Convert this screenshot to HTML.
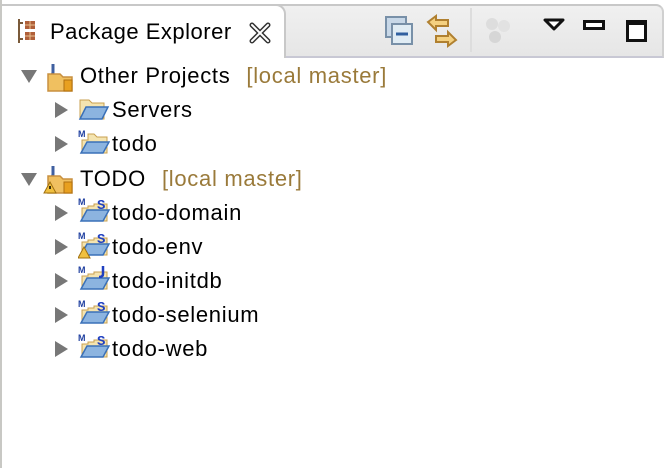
<!DOCTYPE html>
<html><head><style>
body{margin:0;width:666px;height:468px;background:#fff;position:relative;overflow:hidden;font-family:"Liberation Sans",sans-serif;}
.lb{position:absolute;left:0;top:0;width:2px;height:468px;background:#c8c8c4}
.bar{position:absolute;left:0;top:4px;width:662px;height:50px;background:linear-gradient(#f0f0f0,#e6e6e6);border-top:2px solid #c8c8c8;border-right:2px solid #d0d0d0;border-radius:0 8px 0 0;border-bottom:2px solid #c8c8d4}
.tab{position:absolute;left:0;top:4px;width:286px;height:54px;background:#fff;border:2px solid #c8c8c8;border-bottom:none;border-left:none;border-radius:0 10px 0 0;box-sizing:border-box}
.t{position:absolute;font-size:22px;letter-spacing:0.7px;color:#000;line-height:24px;white-space:nowrap}
.g{color:#9a7a3a;margin-left:16px}
.arr{position:absolute;width:0;height:0}
.r{border-top:8px solid transparent;border-bottom:8px solid transparent;border-left:13px solid #777}
.d{border-left:8px solid transparent;border-right:8px solid transparent;border-top:13px solid #777}
</style></head><body>
<div class="bar"></div>
<div class="tab"></div>
<div class="lb"></div>
<svg style="position:absolute;left:17px;top:19px" width="20" height="24"><path d="M2 0v24M2 4h4M2 20h4" stroke="#7a5a3a" stroke-width="2" fill="none"/><rect x="8" y="2" width="10" height="8" fill="#b0603a"/><rect x="8" y="13" width="10" height="8" fill="#b0603a"/><path d="M13 2v8M8 6h10M13 13v8M8 17h10" stroke="#e8c090" stroke-width="1"/></svg>
<div class="t" style="left:50px;top:20px;letter-spacing:0.5px">Package Explorer</div>
<svg style="position:absolute;left:249px;top:22px" width="22" height="22"><path d="M3 3l16 16M19 3L3 19" stroke="#333" stroke-width="5" stroke-linecap="round"/><path d="M3 3l16 16M19 3L3 19" stroke="#fff" stroke-width="2" stroke-linecap="round"/></svg>
<svg style="position:absolute;left:385px;top:16px" width="28" height="30"><rect x="1" y="1" width="20" height="20" fill="#c8d8e8" stroke="#7890a8" stroke-width="2"/><rect x="7" y="8" width="20" height="20" fill="#e0ecf4" stroke="#7890a8" stroke-width="2"/><path d="M11 18h12" stroke="#3060a0" stroke-width="3"/></svg>
<svg style="position:absolute;left:425px;top:14px" width="34" height="34"><path d="M3 8l8-6v4h12v6H11v4z" fill="#f4d080" stroke="#b08030" stroke-width="2"/><path d="M31 26l-8 6v-4H11v-6h12v-4z" fill="#f4d080" stroke="#b08030" stroke-width="2"/></svg>
<div style="position:absolute;left:470px;top:8px;width:2px;height:44px;background:#ddd"></div>
<svg style="position:absolute;left:484px;top:16px" width="30" height="30"><circle cx="8" cy="8" r="6" fill="#ddd"/><circle cx="20" cy="10" r="6" fill="#e2e2e2"/><circle cx="11" cy="21" r="6" fill="#d6d6d6"/></svg>
<svg style="position:absolute;left:543px;top:18px" width="22" height="14"><path d="M2 2h18l-9 9z" fill="#fff" stroke="#111" stroke-width="3" stroke-linejoin="round"/></svg>
<div style="position:absolute;left:583px;top:20px;width:16px;height:4px;border:3px solid #111;background:#fff"></div>
<div style="position:absolute;left:626px;top:20px;width:15px;height:14px;border:3px solid #111;border-top-width:5px;background:#fff"></div>
<div class="arr d" style="left:21px;top:70px"></div>
<svg style="position:absolute;left:42px;top:62px" width="34" height="30"><path d="M11 2v8q0 4-4 4" stroke="#4060a0" stroke-width="3" fill="none"/><path d="M6 12h12l3 3h9v14H6z" fill="#f0c060" stroke="#c89040" stroke-width="1.5"/><rect x="22" y="18" width="8" height="11" fill="#e8a020" stroke="#b07010"/></svg>
<div class="t" style="left:80px;top:64px">Other Projects<span class="g">[local master]</span></div>
<div class="arr r" style="left:55px;top:102px"></div>
<svg style="position:absolute;left:78px;top:96px" width="32" height="26"><path d="M2 4h9l3 3h12v16H2z" fill="#f4e4b0" stroke="#c8a050"/><path d="M2 23l6-12h22l-6 12z" fill="#8cb4e0" stroke="#3a70b8" stroke-width="1.5"/></svg>
<div class="t" style="left:112px;top:98px">Servers</div>
<div class="arr r" style="left:55px;top:136px"></div>
<svg style="position:absolute;left:78px;top:128px" width="32" height="28"><text x="0" y="9" font-size="9" font-weight="bold" fill="#2040a0" font-family="Liberation Sans">M</text><path d="M10 6h6l3 3h10v16H4V12h6z" fill="#f4e4b0" stroke="#c8a050"/><path d="M3 25l6-11h22l-6 11z" fill="#8cb4e0" stroke="#3a70b8" stroke-width="1.5"/></svg>
<div class="t" style="left:112px;top:132px">todo</div>
<div class="arr d" style="left:21px;top:173px"></div>
<svg style="position:absolute;left:42px;top:164px" width="34" height="30"><path d="M11 2v8q0 4-4 4" stroke="#4060a0" stroke-width="3" fill="none"/><path d="M6 12h12l3 3h9v14H6z" fill="#f0c060" stroke="#c89040" stroke-width="1.5"/><rect x="22" y="18" width="8" height="11" fill="#e8a020" stroke="#b07010"/><path d="M2 29l6-11 6 11z" fill="#f0c040" stroke="#a07010"/><path d="M8 22v3" stroke="#000" stroke-width="1.5"/></svg>
<div class="t" style="left:80px;top:167px">TODO<span class="g">[local master]</span></div>
<div class="arr r" style="left:55px;top:205px"></div>
<div class="arr r" style="left:55px;top:239px"></div>
<div class="arr r" style="left:55px;top:273px"></div>
<div class="arr r" style="left:55px;top:307px"></div>
<div class="arr r" style="left:55px;top:341px"></div>
<svg style="position:absolute;left:78px;top:196px" width="34" height="170">
<defs><g id="f"><text x="0" y="9" font-size="9" font-weight="bold" fill="#2040a0" font-family="Liberation Sans">M</text><path d="M10 10h6v-2h13v17H4V12h6z" fill="#f4e4b0" stroke="#c8a050"/><path d="M3 25l6-11h22l-6 11z" fill="#8cb4e0" stroke="#3a70b8" stroke-width="1.5"/></g></defs>
<use href="#f" y="0"/><text x="19" y="13" font-size="14" font-weight="bold" fill="#2040c0" font-family="Liberation Mono">S</text>
<use href="#f" y="34"/><text x="19" y="47" font-size="14" font-weight="bold" fill="#2040c0" font-family="Liberation Mono">S</text><path d="M0 62l6-11 6 11z" fill="#f0c040" stroke="#a07010"/>
<use href="#f" y="68"/><path d="M25 70v8q0 3-4 3" stroke="#2040c0" stroke-width="2.5" fill="none"/>
<use href="#f" y="102"/><text x="19" y="115" font-size="14" font-weight="bold" fill="#2040c0" font-family="Liberation Mono">S</text>
<use href="#f" y="136"/><text x="19" y="149" font-size="14" font-weight="bold" fill="#2040c0" font-family="Liberation Mono">S</text>
</svg>
<div class="t" style="left:112px;top:201px">todo-domain</div>
<div class="t" style="left:112px;top:235px">todo-env</div>
<div class="t" style="left:112px;top:269px">todo-initdb</div>
<div class="t" style="left:112px;top:303px">todo-selenium</div>
<div class="t" style="left:112px;top:337px">todo-web</div>
</body></html>
